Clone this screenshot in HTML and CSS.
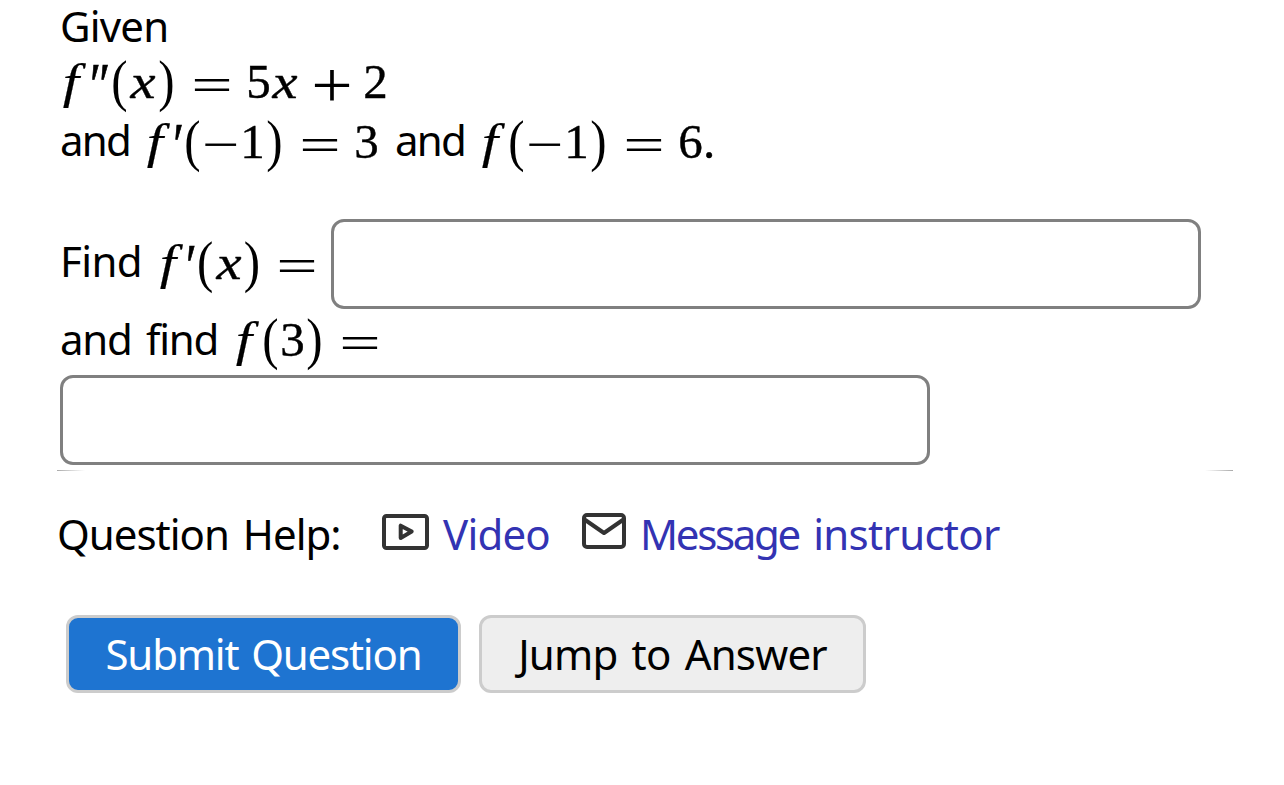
FILE: index.html
```html
<!DOCTYPE html>
<html lang="en">
<head>
    <meta charset="UTF-8">
    <meta name="viewport" content="width=device-width, initial-scale=1.0">
    <title>Question</title>
    <link rel="stylesheet" href="styles.css">
</head>
<body>
    <div class="question">
        <div class="line given"><span class="w-given">Given</span></div>
        <div class="line second">
            <span class="math"><i class="f">f</i><i class="prime double">″</i><b class="paren">(</b><i class="x">x</i><b class="paren">)</b><b class="rel">=</b><b class="num">5</b><i class="x">x</i><b class="plus">+</b><b class="num">2</b></span>
        </div>
        <div class="line third">
            <span class="and">and</span>
            <span class="math m1"><i class="f">f</i><i class="prime">′</i><b class="paren">(</b><b class="op">−</b><b class="num">1</b><b class="paren">)</b><b class="rel">=</b><b class="num">3</b></span>
            <span class="and">and</span>
            <span class="math m2"><i class="f">f</i><b class="paren">(</b><b class="op">−</b><b class="num">1</b><b class="paren">)</b><b class="rel">=</b><b class="num">6</b><b class="dot">.</b></span>
        </div>

        <div class="line answer">
            <span class="w-find">Find</span>
            <span class="math m3"><i class="f">f</i><i class="prime">′</i><b class="paren">(</b><i class="x">x</i><b class="paren">)</b><b class="rel">=</b></span>
            <input type="text" class="box" aria-label="f prime of x">
        </div>
        <div class="line last">
            <span class="w-andfind">and find</span>
            <span class="math m4"><i class="f">f</i><b class="paren">(</b><b class="num">3</b><b class="paren">)</b><b class="rel">=</b></span>
        </div>
        <input type="text" class="box" aria-label="f of 3">
    </div>

    <div class="divider"></div>

    <div class="help">
        <span class="help-label">Question Help:</span>
        <svg class="icon-video" width="48" height="38" viewBox="0 0 48 38" fill="none" stroke="#333" stroke-width="4" stroke-linejoin="round">
            <rect x="2" y="2" width="43" height="32" rx="2.5"/>
            <path d="M18.7 11.7v12.2l11-6.3z"/>
        </svg>
        <a href="#" class="video">Video</a>
        <svg class="icon-mail" width="44" height="38" viewBox="0 0 44 38" fill="none" stroke="#333" stroke-width="4" stroke-linejoin="round">
            <rect x="2" y="2" width="40" height="32" rx="3"/>
            <path d="M2.5 6.5L22 20L41.5 6.5"/>
        </svg>
        <a href="#" class="message"><span>Message</span> instructor</a>
    </div>

    <div class="buttons">
        <button class="primary"><span>Submit Question</span></button>
        <button class="secondary"><span>Jump to Answer</span></button>
    </div>
</body>
</html>
```
FILE: styles.css
```css
* {
    box-sizing: border-box;
}
body {
    margin: 0;
    background-color: #fff;
    color: #000;
    font-family: "Trebuchet MS", "Noto Sans", sans-serif;
    font-size: 42px;
}
.question {
    padding-left: 60px;
}
.line {
    display: flex;
    height: 60px;
    line-height: 60px;
    white-space: nowrap;
}
.line span {
    flex: none;
}
.given {
    height: 52px;
    line-height: 51px;
}
.w-given {
    letter-spacing: -0.8px;
}
.and {
    width: 84px;
    line-height: 56px;
    letter-spacing: -1.8px;
}
.second .math, .third .math {
    line-height: 59px;
}
.m1 {
    width: 251px;
}
.answer {
    height: 90px;
    line-height: 83px;
    margin-top: 47px;
}
.w-find {
    width: 97px;
    letter-spacing: -0.6px;
}
.m3 {
    width: 174px;
    line-height: 87px;
}
.last {
    height: 66px;
}
.w-andfind {
    width: 173px;
    letter-spacing: -1.3px;
    word-spacing: 5px;
}
.m4 {
    line-height: 62px;
}
.math {
    display: flex;
    font-family: "Liberation Serif", serif;
    font-size: 49px;
    -webkit-text-stroke: 0.4px;
}
.math i, .math b {
    display: block;
    text-align: center;
    font-weight: normal;
}
.math .f {
    width: 28px;
    -webkit-text-stroke: 0.2px;
    transform: translateX(-3px) scaleX(1.2);
}
.math .prime {
    width: 11px;
    -webkit-text-stroke: 0.6px;
    transform: translate(-2px, 3px) scaleY(1.25);
}
.math .double {
    width: 22px;
}
.math .paren {
    width: 19px;
    -webkit-text-stroke: 0;
    transform: scaleY(1.15);
}
.math .x {
    width: 28px;
    transform: scaleX(1.15);
}
.math .num {
    width: 25px;
}
.math .op, .math .rel, .math .plus {
    width: 38px;
    -webkit-text-stroke: 0;
    transform: translateY(3px) scaleX(1.35);
}
.math .rel {
    margin: 0 15px 0 17px;
    transform: translateY(3px) scaleX(1.5);
}
.math .plus {
    margin: 0 13px;
    transform: translate(1px, 3px) scale(1.5, 1.35);
}
.box {
    display: block;
    width: 870px;
    height: 90px;
    padding: 0 12px;
    border: 3px solid #808080;
    border-radius: 13px;
    background-color: #fff;
    font-size: 42px;
}
.divider {
    height: 1px;
    margin: 5px 51px 0 57px;
    background: linear-gradient(to right, #aaa, transparent 28px, transparent calc(100% - 28px), #aaa);
}
.help {
    display: flex;
    align-items: center;
    height: 60px;
    margin-top: 32px;
    padding-left: 57px;
    white-space: nowrap;
}
.help-label {
    width: 325px;
    letter-spacing: -1px;
    word-spacing: 4px;
}
.help a {
    color: #3333b3;
    text-decoration: none;
    letter-spacing: -0.8px;
}
.icon-video {
    margin-right: 13px;
}
.help .video {
    width: 139px;
}
.icon-mail {
    margin: 0 14px 2px 0;
}
.help .message {
    letter-spacing: -0.7px;
    word-spacing: 4px;
}
.message span {
    letter-spacing: -2.3px;
}
.buttons {
    display: flex;
    gap: 18px;
    margin-top: 52px;
    padding-left: 66px;
}
button {
    height: 78px;
    padding: 0 0 2px;
    border: 3px solid #ccc;
    border-radius: 12px;
    font-family: inherit;
    font-size: 42px;
    white-space: nowrap;
}
.primary {
    width: 395px;
    background-color: #1e74d1;
    color: #fff;
    letter-spacing: -1.2px;
    word-spacing: 3px;
}
.secondary {
    width: 387px;
    background-color: #eee;
    color: #000;
    letter-spacing: -0.8px;
    word-spacing: 4px;
}
```
